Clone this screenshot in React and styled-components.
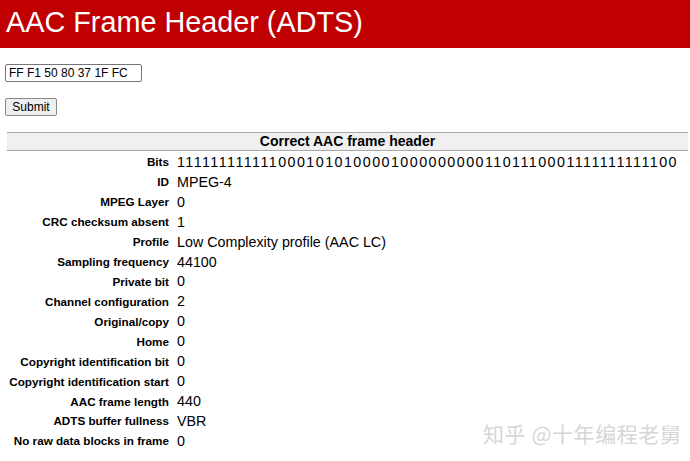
import { createGlobalStyle } from "styled-components";
import styled from "styled-components";

const GlobalStyle = createGlobalStyle`
  html, body {
    margin: 0;
    padding: 0;
    background: #fff;
    font-family: "Liberation Sans", Arial, sans-serif;
    color: #000;
  }
`;

const Page = styled.div`
  position: relative;
  width: 690px;
  height: 461px;
  overflow: hidden;
`;

const Header = styled.header`
  display: flex;
  align-items: center;
  height: 48px;
  padding: 0 6px 4px;
  box-sizing: border-box;
  background: #c00000;
  color: #fff;
  font-size: 28.8px;
  white-space: nowrap;
`;

const Form = styled.form`
  display: flex;
  flex-direction: column;
  align-items: flex-start;
  gap: 16px;
  padding: 16px 5px 0;
`;

const HexInput = styled.input`
  width: 137px;
  height: 18px;
  box-sizing: border-box;
  padding: 0 3px;
  border: 1px solid #767676;
  border-radius: 2px;
  font-family: "Liberation Sans", Arial, sans-serif;
  font-size: 12px;
  color: #000;
`;

const SubmitButton = styled.button`
  height: 18px;
  width: 52px;
  padding: 0;
  border: 1px solid #8a8a8a;
  border-radius: 2px;
  background: #efefef;
  font-family: "Liberation Sans", Arial, sans-serif;
  font-size: 12px;
  color: #000;
`;

const Table = styled.section`
  margin: 16px 2px 0 7px;
`;

const Caption = styled.div`
  height: 19px;
  box-sizing: border-box;
  border-top: 1px solid #a8a8a8;
  border-bottom: 1px solid #a8a8a8;
  background: #f0f0f0;
  text-align: center;
  font-size: 14px;
  font-weight: bold;
  line-height: 17px;
`;

const Rows = styled.div`
  display: grid;
  grid-template-columns: 170px 1fr;
  grid-auto-rows: 19.93px;
  align-items: center;
  padding-top: 1px;
`;

const Label = styled.div`
  padding-right: 8px;
  text-align: right;
  font-size: 11.7px;
  font-weight: bold;
  white-space: nowrap;
`;

const Value = styled.div`
  font-size: 14.3px;
  white-space: nowrap;
  letter-spacing: ${(p) => (p.$bits ? "1.45px" : "0")};
`;

const Watermark = styled.div`
  position: absolute;
  left: 483px;
  top: 418px;
  font-family: "Noto Sans CJK SC", sans-serif;
  font-size: 21px;
  letter-spacing: 0.6px;
  color: #d6d6d6;
  white-space: nowrap;
`;

const hex = "FF F1 50 80 37 1F FC";
const bits = hex
  .split(" ")
  .map((b) => parseInt(b, 16).toString(2).padStart(8, "0"))
  .join("");

const fields = [
  ["Bits", bits, true],
  ["ID", "MPEG-4"],
  ["MPEG Layer", "0"],
  ["CRC checksum absent", "1"],
  ["Profile", "Low Complexity profile (AAC LC)"],
  ["Sampling frequency", "44100"],
  ["Private bit", "0"],
  ["Channel configuration", "2"],
  ["Original/copy", "0"],
  ["Home", "0"],
  ["Copyright identification bit", "0"],
  ["Copyright identification start", "0"],
  ["AAC frame length", "440"],
  ["ADTS buffer fullness", "VBR"],
  ["No raw data blocks in frame", "0"],
];

export default function App() {
  return (
    <Page>
      <GlobalStyle />
      <Header>AAC Frame Header (ADTS)</Header>
      <Form onSubmit={(e) => e.preventDefault()}>
        <HexInput type="text" defaultValue={hex} />
        <SubmitButton type="submit">Submit</SubmitButton>
      </Form>
      <Table>
        <Caption>Correct AAC frame header</Caption>
        <Rows>
          {fields.map(([label, value, isBits]) => [
            <Label key={label + "-l"}>{label}</Label>,
            <Value key={label + "-v"} $bits={isBits}>
              {value}
            </Value>,
          ])}
        </Rows>
      </Table>
      <Watermark>知乎 @十年编程老舅</Watermark>
    </Page>
  );
}
